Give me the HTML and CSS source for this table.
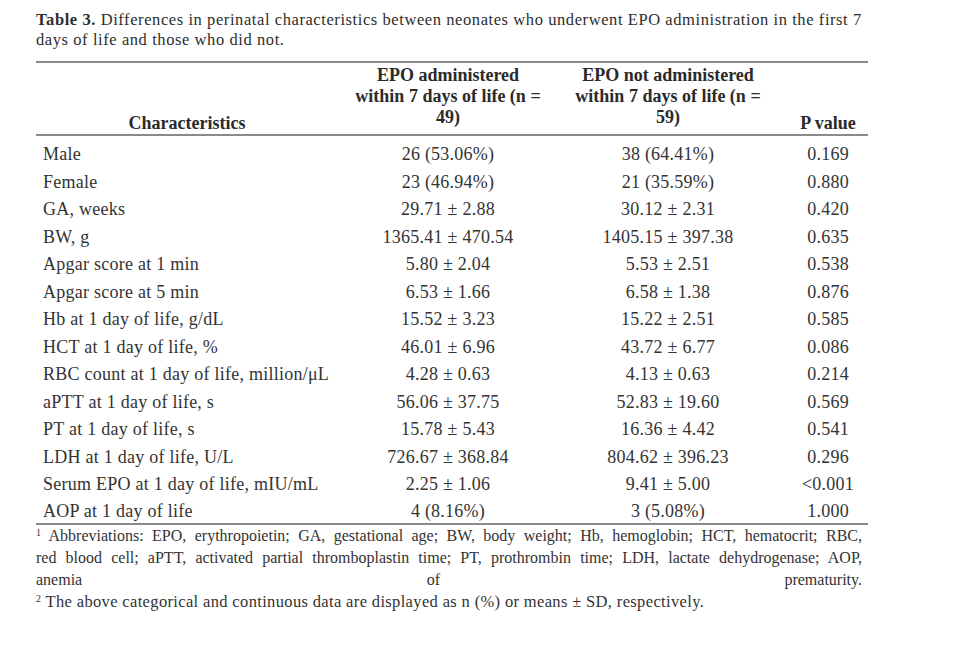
FILE: index.html
```html
<!DOCTYPE html>
<html lang="en">
<head>
<meta charset="utf-8">
<title>Table 3</title>
<link rel="stylesheet" href="styles.css">
</head>
<body>
<div class="page">
  <p class="caption"><b>Table 3.</b> Differences in perinatal characteristics between neonates who underwent EPO administration in the first 7<br>days of life and those who did not.</p>
  <table class="data">
    <colgroup>
      <col class="c1"><col class="c2"><col class="c3"><col class="c4">
    </colgroup>
    <thead>
      <tr>
        <th class="h-side">Characteristics</th>
        <th class="h-group">EPO administered<br>within 7 days of life (n =<br>49)</th>
        <th class="h-group">EPO not administered<br>within 7 days of life (n =<br>59)</th>
        <th class="h-side h-p">P value</th>
      </tr>
    </thead>
    <tbody>
      <tr><td>Male</td><td>26 (53.06%)</td><td>38 (64.41%)</td><td>0.169</td></tr>
      <tr><td>Female</td><td>23 (46.94%)</td><td>21 (35.59%)</td><td>0.880</td></tr>
      <tr><td>GA, weeks</td><td>29.71 ± 2.88</td><td>30.12 ± 2.31</td><td>0.420</td></tr>
      <tr><td>BW, g</td><td>1365.41 ± 470.54</td><td>1405.15 ± 397.38</td><td>0.635</td></tr>
      <tr><td>Apgar score at 1 min</td><td>5.80 ± 2.04</td><td>5.53 ± 2.51</td><td>0.538</td></tr>
      <tr><td>Apgar score at 5 min</td><td>6.53 ± 1.66</td><td>6.58 ± 1.38</td><td>0.876</td></tr>
      <tr><td>Hb at 1 day of life, g/dL</td><td>15.52 ± 3.23</td><td>15.22 ± 2.51</td><td>0.585</td></tr>
      <tr><td>HCT at 1 day of life, %</td><td>46.01 ± 6.96</td><td>43.72 ± 6.77</td><td>0.086</td></tr>
      <tr><td>RBC count at 1 day of life, million/μL</td><td>4.28 ± 0.63</td><td>4.13 ± 0.63</td><td>0.214</td></tr>
      <tr><td>aPTT at 1 day of life, s</td><td>56.06 ± 37.75</td><td>52.83 ± 19.60</td><td>0.569</td></tr>
      <tr><td>PT at 1 day of life, s</td><td>15.78 ± 5.43</td><td>16.36 ± 4.42</td><td>0.541</td></tr>
      <tr><td>LDH at 1 day of life, U/L</td><td>726.67 ± 368.84</td><td>804.62 ± 396.23</td><td>0.296</td></tr>
      <tr><td>Serum EPO at 1 day of life, mIU/mL</td><td>2.25 ± 1.06</td><td>9.41 ± 5.00</td><td>&lt;0.001</td></tr>
      <tr><td>AOP at 1 day of life</td><td>4 (8.16%)</td><td>3 (5.08%)</td><td>1.000</td></tr>
    </tbody>
  </table>
  <p class="note note-just"><sup class="mark">1</sup> Abbreviations: EPO, erythropoietin; GA, gestational age; BW, body weight; Hb, hemoglobin; HCT, hematocrit; RBC,<br>red blood cell; aPTT, activated partial thromboplastin time; PT, prothrombin time; LDH, lactate dehydrogenase; AOP,<br>anemia of prematurity.</p>
  <p class="note"><sup class="mark">2</sup> The above categorical and continuous data are displayed as n (%) or means ± SD, respectively.</p>
</div>
</body>
</html>
```

FILE: styles.css
```css
html, body {
  margin: 0;
  padding: 0;
  background: #ffffff;
}

body {
  font-family: "Liberation Serif", "Times New Roman", serif;
  color: #333333;
}

.page {
  padding: 10px 0 0 36px;
  width: 832px;
}

.caption {
  margin: 0 0 11px 0;
  font-size: 16.5px;
  line-height: 20px;
  white-space: nowrap;
  letter-spacing: 0.58px;
  color: #2e2e2e;
}

.caption b {
  font-weight: bold;
}

.data {
  width: 832px;
  border-collapse: collapse;
  table-layout: fixed;
  font-size: 18px;
  border-top: 2px solid #8a8a8a;
  border-bottom: 2px solid #8a8a8a;
}

.c1 { width: 302px; }
.c2 { width: 220px; }
.c3 { width: 220px; }
.c4 { width: 90px; }

.data thead th {
  font-weight: bold;
  line-height: 21px;
  text-align: center;
  border-bottom: 2px solid #8a8a8a;
  white-space: nowrap;
  color: #2a2a2a;
}

.h-group {
  padding: 2px 0 6px 0;
  vertical-align: top;
}

.h-side {
  padding: 0;
  vertical-align: bottom;
}

.h-p {
  padding-left: 10px;
}

.data td {
  padding: 0;
  line-height: 27.5px;
  text-align: center;
  white-space: nowrap;
  letter-spacing: 0.25px;
}

.data td:first-child {
  text-align: left;
  padding-left: 7px;
}

.data td:last-child {
  padding-left: 10px;
}

.data tbody tr:first-child td {
  padding-top: 5px;
}

.data tbody tr:last-child td {
  padding-top: 1px;
  line-height: 23px;
}

.note {
  margin: 0;
  width: 826px;
  font-size: 16.5px;
  line-height: 22px;
  letter-spacing: 0.35px;
}

.note-just {
  font-size: 16px;
  letter-spacing: 0;
  text-align: justify;
  text-align-last: justify;
}

.mark {
  font-size: 10px;
  line-height: 0;
  vertical-align: 5px;
}
```
